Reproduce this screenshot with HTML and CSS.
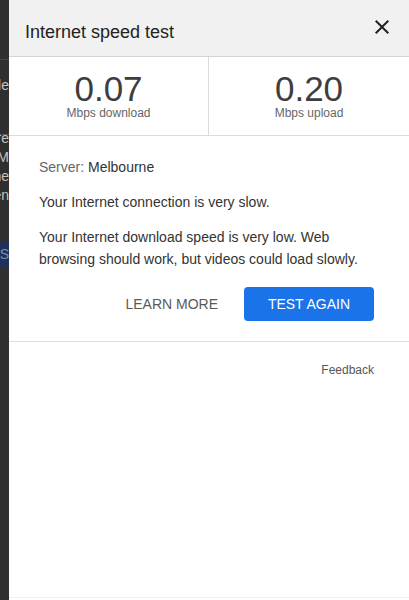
FILE: index.html
```html
<!DOCTYPE html>
<html lang="en">
<head>
<meta charset="utf-8">
<title>Internet speed test</title>
<link rel="stylesheet" href="styles.css">
</head>
<body>
<div class="strip" aria-hidden="true">
  <div class="strip-head"></div>
  <div class="ln ln-first">Table</div>
  <div class="strip-sep"></div>
  <div class="strip-lines">
    <div class="ln">Share</div>
    <div class="ln">SM</div>
    <div class="ln">The</div>
    <div class="ln">Open</div>
  </div>
  <div class="strip-btn"><span class="ln">TESTS</span></div>
</div>
<main class="panel">
  <header class="head">
    <h1 class="title">Internet speed test</h1>
    <button class="close" aria-label="Close">
      <svg width="24" height="24" viewBox="0 0 24 24"><path d="M19 6.41L17.59 5 12 10.59 6.41 5 5 6.41 10.59 12 5 17.59 6.41 19 12 13.41 17.59 19 19 17.59 13.41 12z" fill="#222"/></svg>
    </button>
  </header>
  <section class="stats">
    <div class="stat stat-down">
      <div class="num">0.07</div>
      <div class="unit">Mbps download</div>
    </div>
    <div class="stat">
      <div class="num">0.20</div>
      <div class="unit">Mbps upload</div>
    </div>
  </section>
  <section class="body">
    <p class="server"><span class="server-label">Server:</span> Melbourne</p>
    <p class="msg">Your Internet connection is very slow.</p>
    <p class="msg">Your Internet download speed is very low. Web browsing should work, but videos could load slowly.</p>
    <div class="actions">
      <button class="btn-text">LEARN MORE</button>
      <button class="btn-primary">TEST AGAIN</button>
    </div>
  </section>
  <footer class="foot">
    <a class="feedback" href="#">Feedback</a>
  </footer>
</main>
</body>
</html>
```
FILE: styles.css
```css
* { box-sizing: border-box; }
html, body { margin: 0; padding: 0; }
body {
  display: flex;
  height: 600px;
  background: #fff;
  font-family: "Liberation Sans", Arial, sans-serif;
  overflow: hidden;
}

/* underlying page strip */
.strip {
  width: 9px;
  flex: none;
  background: #2f2f2f;
  display: flex;
  flex-direction: column;
  overflow: hidden;
}
.strip-head {
  height: 60px;
  flex: none;
  border-bottom: 1px solid #474747;
}
.ln {
  display: flex;
  justify-content: flex-end;
  white-space: nowrap;
  font-size: 14px;
  line-height: 19px;
  color: #c4c4c4;
}
.ln-first { margin-top: 16px; }
.strip-sep {
  height: 40px;
  flex: none;
  border-bottom: 1px solid #555;
}
.strip-lines {
  height: 106px;
  flex: none;
  overflow: hidden;
}
.strip-lines .ln:first-child { margin-top: -6px; }
.strip-btn {
  height: 27px;
  flex: none;
  background: #1d3159;
  display: flex;
  align-items: center;
  justify-content: flex-end;
}
.strip-btn .ln { color: #7e8fb0; }

/* panel */
.panel {
  flex: 1;
  display: flex;
  flex-direction: column;
  background: #fff;
  border-bottom: 1px solid #efefef;
  height: 598px;
}
.head {
  height: 57px;
  flex: none;
  background: #f1f1f1;
  border-bottom: 1px solid #d4d4d4;
  display: flex;
  justify-content: space-between;
  align-items: flex-start;
  padding: 0 15px 0 16px;
}
.title {
  margin: 22px 0 0;
  font-size: 18px;
  line-height: 20px;
  font-weight: normal;
  color: #222;
}
.close {
  margin-top: 15px;
  padding: 0;
  border: 0;
  background: none;
  width: 24px;
  height: 24px;
  display: block;
}
.close svg { display: block; }

.stats {
  height: 79px;
  flex: none;
  border-bottom: 1px solid #dcdcdc;
  display: grid;
  grid-template-columns: 200px 1fr;
}
.stat {
  display: flex;
  flex-direction: column;
  align-items: center;
  padding-top: 14px;
}
.stat-down { border-right: 1px solid #dcdcdc; }
.num {
  font-size: 35px;
  line-height: 35px;
  color: #3d3d3d;
}
.unit {
  font-size: 12px;
  line-height: 14px;
  color: #666;
}

.body {
  padding: 20px 35px 20px 30px;
  font-size: 14px;
  line-height: 22px;
  color: #333;
}
.body p { margin: 0 0 13px; }
.server-label { color: #666; }
.actions {
  display: flex;
  justify-content: flex-end;
  align-items: center;
  gap: 26px;
  margin-top: 17px;
}
.btn-text {
  border: 0;
  background: none;
  padding: 0;
  font: 14px/34px "Liberation Sans", Arial, sans-serif;
  color: #5a5a5a;
}
.btn-primary {
  border: 0;
  border-radius: 4px;
  background: #1a73e8;
  color: #fff;
  width: 130px;
  height: 34px;
  padding: 0;
  font: 14px/34px "Liberation Sans", Arial, sans-serif;
}

.foot {
  border-top: 1px solid #dedede;
  padding: 21px 35px 0 0;
  display: flex;
  justify-content: flex-end;
}
.feedback {
  font-size: 12px;
  line-height: 14px;
  color: #555;
  text-decoration: none;
}
```
